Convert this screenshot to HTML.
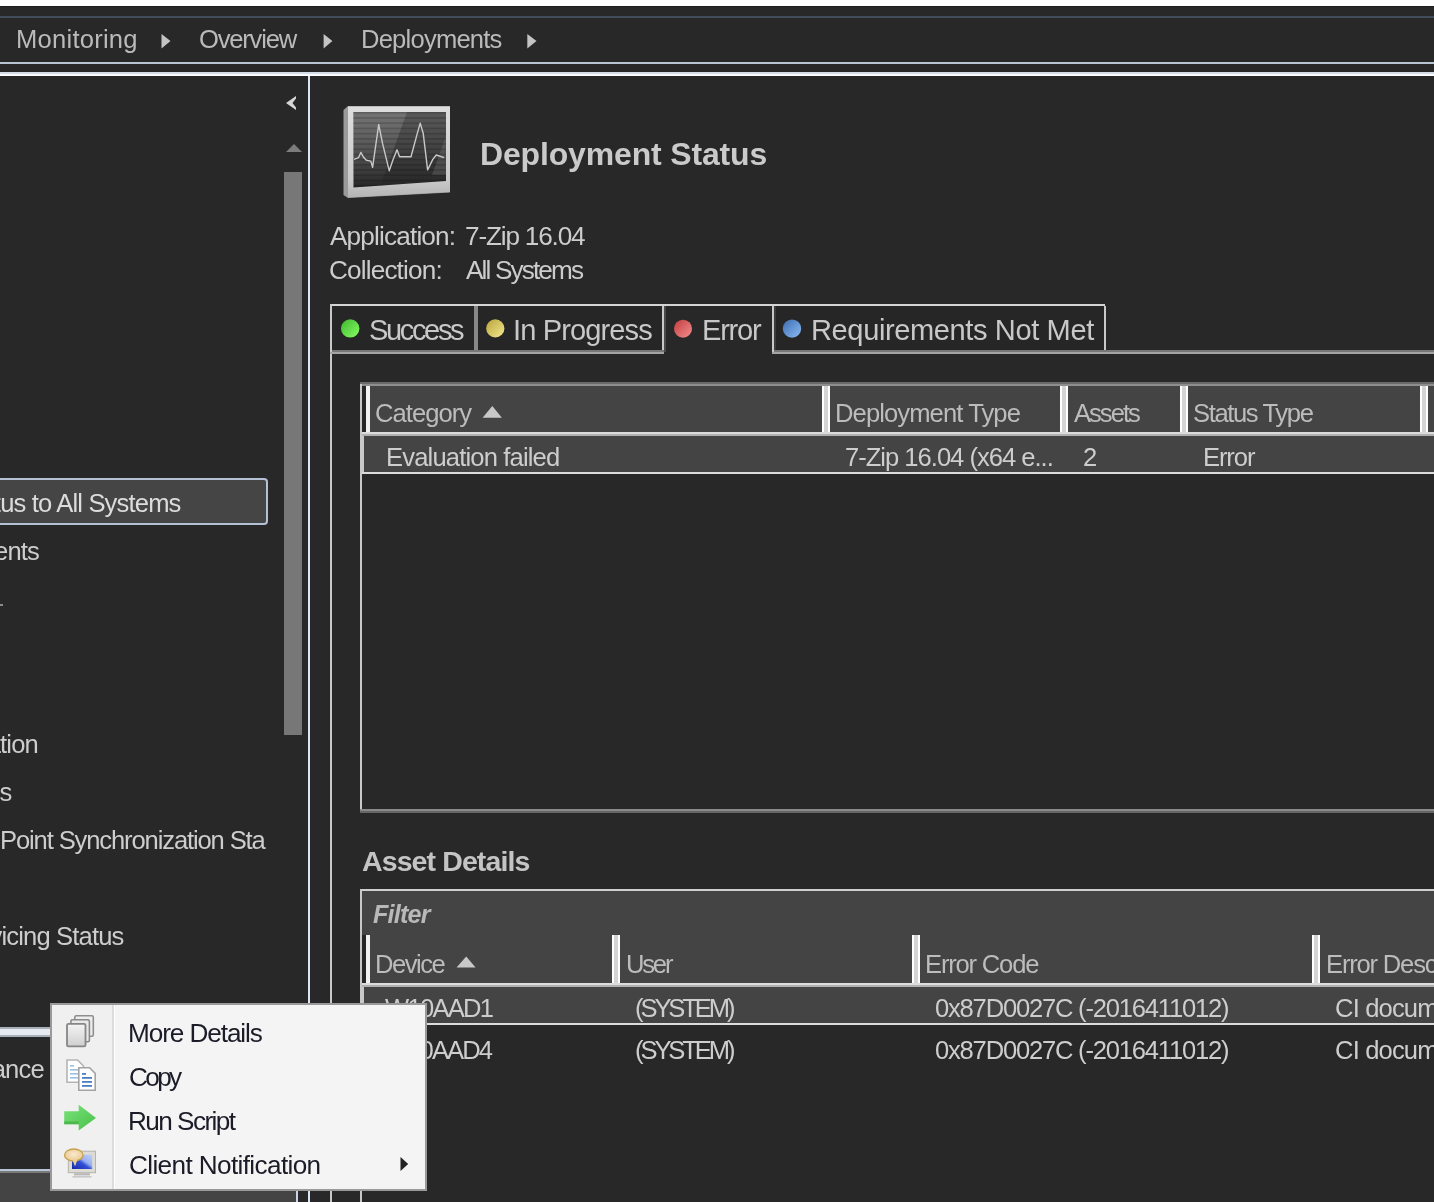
<!DOCTYPE html>
<html><head><meta charset="utf-8"><style>
html,body{margin:0;padding:0;}
body{width:1434px;height:1202px;overflow:hidden;position:relative;background:#282828;font-family:"Liberation Sans",sans-serif;}
.a{position:absolute;}
.t{position:absolute;white-space:nowrap;line-height:1;-webkit-font-smoothing:antialiased;will-change:transform;}
.sep{width:8px;height:46px;background:linear-gradient(90deg,#fff 0,#fff 2px,#d4d4d4 2px,#d4d4d4 6px,#fff 6px);}
.sep2{width:8px;height:48px;background:linear-gradient(90deg,#fff 0,#fff 2px,#d4d4d4 2px,#d4d4d4 6px,#fff 6px);}
</style></head><body>
<!-- top chrome -->
<div class="a" style="left:0;top:0;width:1434px;height:6px;background:#fff"></div>
<div class="a" style="left:0;top:6px;width:1434px;height:1px;background:#1e1e1e"></div>
<div class="a" style="left:0;top:16px;width:1434px;height:2px;background:#414c5a"></div>
<div class="a" style="left:0;top:62px;width:1434px;height:2px;background:#b8c6d4"></div>
<div class="a" style="left:0;top:72px;width:1434px;height:2px;background:#d4dde8"></div>
<div class="a" style="left:0;top:74px;width:1434px;height:2px;background:#fafcff"></div>
<!-- breadcrumb arrows -->
<svg class="a" style="left:0;top:0" width="600" height="60">
 <polygon points="161.5,34 170.5,41 161.5,48.5" fill="#c4c4c4"/>
 <polygon points="323.6,34 332.4,41 323.6,48.5" fill="#c4c4c4"/>
 <polygon points="527.3,34 536.5,41 527.3,48.5" fill="#c4c4c4"/>
</svg>
<!-- vertical divider -->
<div class="a" style="left:308px;top:76px;width:2px;height:1126px;background:#dde6f4"></div>
<!-- left pane controls -->
<svg class="a" style="left:276px;top:88px" width="30" height="70" viewBox="276 88 30 70">
 <polygon points="296,96 286,103 296,110 296,107.5 292.5,103 296,98.5" fill="#d6d6d6"/>
 <polygon points="286,152 294,144 302,152" fill="#7c7c7c"/>
</svg>
<div class="a" style="left:284px;top:172px;width:18px;height:563px;background:#777"></div>
<!-- selected item -->
<div class="a" style="left:-4px;top:478px;width:268px;height:43px;background:#454545;border:2px solid #b4c0d4;border-radius:4px"></div>
<div class="a" style="left:0;top:604px;width:3px;height:2px;background:#8a8a8a"></div>
<!-- left bottom section -->
<div class="a" style="left:0;top:1027px;width:296px;height:2px;background:#a8b0b8"></div>
<div class="a" style="left:0;top:1029px;width:296px;height:6px;background:#e6eaf0"></div>
<div class="a" style="left:0;top:1035px;width:296px;height:2px;background:#a8b0b8"></div>
<div class="a" style="left:0;top:1169px;width:296px;height:2px;background:#b8c4d8"></div>
<div class="a" style="left:0;top:1171px;width:296px;height:2px;background:#7a7a7a"></div>
<div class="a" style="left:0;top:1173px;width:296px;height:29px;background:#444"></div>
<div class="a" style="left:296px;top:1173px;width:2px;height:29px;background:#c8d4e8"></div>

<!-- monitor icon -->
<svg class="a" style="left:335px;top:100px" width="125" height="105" viewBox="335 100 125 105">
 <defs>
  <linearGradient id="frm" x1="0" y1="0" x2="0" y2="1">
   <stop offset="0" stop-color="#dedede"/><stop offset="0.8" stop-color="#cacaca"/><stop offset="1" stop-color="#b4b4b4"/>
  </linearGradient>
  <linearGradient id="scr" x1="0" y1="0" x2="0" y2="1">
   <stop offset="0" stop-color="#5a5a5a"/><stop offset="0.55" stop-color="#3e3e3e"/><stop offset="1" stop-color="#252525"/>
  </linearGradient>
  <linearGradient id="hl" x1="0" y1="0" x2="0" y2="1">
   <stop offset="0" stop-color="#888" stop-opacity="0.55"/><stop offset="1" stop-color="#888" stop-opacity="0"/>
  </linearGradient>
  <pattern id="scan" x="0" y="112" width="10" height="5.2" patternUnits="userSpaceOnUse">
   <rect x="0" y="0" width="10" height="1.6" fill="#000" opacity="0.18"/>
  </pattern>
 </defs>
 <path d="M343.5,110 L348,106 L450,106 L450,192.5 L348,198 L343.5,195 Z" fill="#9a9a9a"/>
 <path d="M348,106.5 L450,106.5 L450,192 L348,197.5 Z" fill="url(#frm)"/>
 <path d="M353.5,112 L446,112 L446,181 L353.5,187.5 Z" fill="url(#scr)"/>
 <path d="M353.5,112 L407,112 L380,187 L353.5,187 Z" fill="url(#hl)"/>
 <path d="M446,136 L446,175 L432,175 Z" fill="#777" opacity="0.35"/>
 <path d="M353.5,112 L446,112 L446,181 L353.5,187.5 Z" fill="url(#scan)"/>
 <polyline points="354,159.4 358.6,157.6 360.8,152.4 363.8,157.6 366.4,160.3 370.8,161.1 372.6,167.3 378.7,124.5 382.6,143.7 389.2,170.7 393.1,159.4 397,149.8 399.6,156.8 411,156.8 417.1,134.1 420.2,123.1 423.2,133.2 427.6,169.9 432.8,159.4 436.3,155 444.2,157.6" fill="none" stroke="#c8c8c8" stroke-width="1.4" stroke-linejoin="round"/>
</svg>

<!-- tab strip -->
<div class="a" style="left:332px;top:306px;width:143px;height:44px;background:#262626"></div>
<div class="a" style="left:478px;top:306px;width:185px;height:44px;background:#262626"></div>
<div class="a" style="left:776px;top:306px;width:329px;height:44px;background:#262626"></div>
<div class="a" style="left:330px;top:304px;width:775px;height:2px;background:#d4d4d4"></div>
<div class="a" style="left:330px;top:304px;width:2px;height:898px;background:#c8c8c8"></div>
<div class="a" style="left:474px;top:306px;width:4px;height:48px;background:#888"></div>
<div class="a" style="left:662px;top:306px;width:2px;height:48px;background:#c8c8c8"></div>
<div class="a" style="left:664px;top:306px;width:2px;height:46px;background:#4a4a4a"></div>
<div class="a" style="left:772px;top:306px;width:2px;height:48px;background:#c8c8c8"></div>
<div class="a" style="left:774px;top:306px;width:2px;height:44px;background:#3c3c3c"></div>
<div class="a" style="left:1104px;top:306px;width:2px;height:48px;background:#c8c8c8"></div>
<div class="a" style="left:332px;top:350px;width:332px;height:2px;background:#777"></div>
<div class="a" style="left:330px;top:352px;width:334px;height:2px;background:#a4a4a4"></div>
<div class="a" style="left:774px;top:350px;width:660px;height:2px;background:#777"></div>
<div class="a" style="left:772px;top:352px;width:662px;height:2px;background:#a4a4a4"></div>
<!-- status dots -->
<svg class="a" style="left:330px;top:310px" width="480" height="40" viewBox="330 310 480 40">
 <defs>
  <linearGradient id="dg" x1="0" y1="0" x2="1" y2="1"><stop offset="0" stop-color="#3fb52e"/><stop offset="1" stop-color="#86ff62"/></linearGradient>
  <linearGradient id="dy" x1="0" y1="0" x2="1" y2="1"><stop offset="0" stop-color="#b8a43a"/><stop offset="1" stop-color="#f4e890"/></linearGradient>
  <linearGradient id="dr" x1="0" y1="0" x2="1" y2="1"><stop offset="0" stop-color="#c23c3c"/><stop offset="1" stop-color="#f49090"/></linearGradient>
  <linearGradient id="db" x1="0" y1="0" x2="1" y2="1"><stop offset="0" stop-color="#3c6cb0"/><stop offset="1" stop-color="#8cbcf4"/></linearGradient>
 </defs>
 <circle cx="350.2" cy="328.4" r="9.2" fill="url(#dg)"/>
 <circle cx="495.3" cy="328.4" r="9.1" fill="url(#dy)"/>
 <circle cx="683" cy="328.7" r="9.0" fill="url(#dr)"/>
 <circle cx="792" cy="328.6" r="9.2" fill="url(#db)"/>
</svg>

<!-- grid 1 -->
<div class="a" style="left:360px;top:382px;width:1074px;height:2px;background:#6a6a6a"></div>
<div class="a" style="left:360px;top:384px;width:1074px;height:2px;background:#8e8e8e"></div>
<div class="a" style="left:360px;top:384px;width:2px;height:428px;background:#c8c8c8"></div>
<div class="a" style="left:362px;top:386px;width:1072px;height:46px;background:#444"></div>
<div class="a" style="left:362px;top:386px;width:4px;height:46px;background:#262626"></div>
<div class="a" style="left:366px;top:386px;width:4px;height:46px;background:#f2f2f2"></div>
<div class="a" style="left:362px;top:432px;width:1072px;height:2px;background:#dcdcdc"></div>
<div class="a" style="left:362px;top:434px;width:1072px;height:2px;background:#b0b0b0"></div>
<div class="a" style="left:364px;top:436px;width:1070px;height:36px;background:#444"></div>
<div class="a" style="left:362px;top:436px;width:2px;height:36px;background:#c8c8c8"></div>
<div class="a" style="left:362px;top:472px;width:1072px;height:2px;background:#dcdcdc"></div>
<div class="a" style="left:360px;top:809px;width:1074px;height:2px;background:#8a8a8a"></div>
<div class="a" style="left:360px;top:811px;width:1074px;height:2px;background:#666"></div>
<!-- grid1 separators -->
<div class="a sep" style="left:822px;top:386px"></div>
<div class="a sep" style="left:1060px;top:386px"></div>
<div class="a sep" style="left:1180px;top:386px"></div>
<div class="a sep" style="left:1420px;top:386px"></div>
<svg class="a" style="left:480px;top:400px" width="30" height="24"><polygon points="2.6,17.8 12.3,6 21.9,17.8" fill="#c8c8c8"/></svg>

<!-- grid 2 -->
<div class="a" style="left:360px;top:889px;width:1074px;height:2px;background:#cfcfcf"></div>
<div class="a" style="left:360px;top:889px;width:2px;height:313px;background:#c8c8c8"></div>
<div class="a" style="left:362px;top:891px;width:1072px;height:92px;background:#444"></div>
<div class="a" style="left:362px;top:935px;width:4px;height:48px;background:#262626"></div>
<div class="a" style="left:366px;top:935px;width:4px;height:48px;background:#f2f2f2"></div>
<div class="a" style="left:362px;top:983px;width:1072px;height:2px;background:#dcdcdc"></div>
<div class="a" style="left:362px;top:985px;width:1072px;height:2px;background:#b0b0b0"></div>
<div class="a" style="left:364px;top:987px;width:1070px;height:36px;background:#444"></div>
<div class="a" style="left:362px;top:987px;width:2px;height:36px;background:#c8c8c8"></div>
<div class="a" style="left:362px;top:1023px;width:1072px;height:2px;background:#dcdcdc"></div>
<div class="a sep2" style="left:612px;top:935px"></div>
<div class="a sep2" style="left:912px;top:935px"></div>
<div class="a sep2" style="left:1312px;top:935px"></div>
<svg class="a" style="left:454px;top:950px" width="30" height="24"><polygon points="2.6,17.5 12.2,6.5 21.6,17.5" fill="#c8c8c8"/></svg>

<div class="t" style="left:15.50px;top:27.25px;font-size:25.58px;letter-spacing:0.234px;color:#bababa;font-weight:normal;font-style:normal">Monitoring</div>
<div class="t" style="left:199.30px;top:27.25px;font-size:25.58px;letter-spacing:-1.204px;color:#bababa;font-weight:normal;font-style:normal">Overview</div>
<div class="t" style="left:360.80px;top:27.25px;font-size:25.58px;letter-spacing:-0.788px;color:#bababa;font-weight:normal;font-style:normal">Deployments</div>
<div class="t" style="left:479.50px;top:137.83px;font-size:31.98px;letter-spacing:-0.142px;color:#cacaca;font-weight:bold;font-style:normal">Deployment Status</div>
<div class="t" style="left:330.00px;top:222.75px;font-size:26.16px;letter-spacing:-0.833px;color:#cccccc;font-weight:normal;font-style:normal">Application:</div>
<div class="t" style="left:465.20px;top:222.75px;font-size:26.16px;letter-spacing:-1.167px;color:#cccccc;font-weight:normal;font-style:normal">7-Zip 16.04</div>
<div class="t" style="left:329.00px;top:256.75px;font-size:26.16px;letter-spacing:-0.846px;color:#cccccc;font-weight:normal;font-style:normal">Collection:</div>
<div class="t" style="left:466.20px;top:256.75px;font-size:26.16px;letter-spacing:-1.854px;color:#cccccc;font-weight:normal;font-style:normal">All Systems</div>
<div class="t" style="left:369.20px;top:316.29px;font-size:29.07px;letter-spacing:-2.376px;color:#c8c8c8;font-weight:normal;font-style:normal">Success</div>
<div class="t" style="left:513.30px;top:316.29px;font-size:29.07px;letter-spacing:-0.880px;color:#c8c8c8;font-weight:normal;font-style:normal">In Progress</div>
<div class="t" style="left:701.50px;top:316.29px;font-size:29.07px;letter-spacing:-1.244px;color:#c8c8c8;font-weight:normal;font-style:normal">Error</div>
<div class="t" style="left:811.00px;top:316.29px;font-size:29.07px;letter-spacing:-0.395px;color:#c8c8c8;font-weight:normal;font-style:normal">Requirements Not Met</div>
<div class="t" style="left:374.80px;top:400.95px;font-size:25.58px;letter-spacing:-0.971px;color:#bcbcbc;font-weight:normal;font-style:normal">Category</div>
<div class="t" style="left:835.40px;top:400.95px;font-size:25.58px;letter-spacing:-0.908px;color:#bcbcbc;font-weight:normal;font-style:normal">Deployment Type</div>
<div class="t" style="left:1074.30px;top:400.95px;font-size:25.58px;letter-spacing:-1.994px;color:#bcbcbc;font-weight:normal;font-style:normal">Assets</div>
<div class="t" style="left:1192.80px;top:400.95px;font-size:25.58px;letter-spacing:-1.375px;color:#bcbcbc;font-weight:normal;font-style:normal">Status Type</div>
<div class="t" style="left:385.50px;top:445.25px;font-size:25.58px;letter-spacing:-0.842px;color:#cdcdcd;font-weight:normal;font-style:normal">Evaluation failed</div>
<div class="t" style="left:844.70px;top:445.25px;font-size:25.58px;letter-spacing:-1.005px;color:#cdcdcd;font-weight:normal;font-style:normal">7-Zip 16.04 (x64 e...</div>
<div class="t" style="left:1083.00px;top:445.25px;font-size:25.58px;letter-spacing:0.000px;color:#cdcdcd;font-weight:normal;font-style:normal">2</div>
<div class="t" style="left:1202.80px;top:445.25px;font-size:25.58px;letter-spacing:-1.105px;color:#cdcdcd;font-weight:normal;font-style:normal">Error</div>
<div class="t" style="left:362.40px;top:847.38px;font-size:28.49px;letter-spacing:-0.881px;color:#c4c4c4;font-weight:bold;font-style:normal">Asset Details</div>
<div class="t" style="left:373.00px;top:902.41px;font-size:25.15px;letter-spacing:-0.810px;color:#b8b8b8;font-weight:bold;font-style:italic">Filter</div>
<div class="t" style="left:375.00px;top:952.25px;font-size:25.58px;letter-spacing:-1.492px;color:#bcbcbc;font-weight:normal;font-style:normal">Device</div>
<div class="t" style="left:625.80px;top:952.25px;font-size:25.58px;letter-spacing:-2.195px;color:#bcbcbc;font-weight:normal;font-style:normal">User</div>
<div class="t" style="left:925.00px;top:952.25px;font-size:25.58px;letter-spacing:-1.185px;color:#bcbcbc;font-weight:normal;font-style:normal">Error Code</div>
<div class="t" style="left:1325.50px;top:952.25px;font-size:25.58px;letter-spacing:-1.185px;color:#bcbcbc;font-weight:normal;font-style:normal">Error Description</div>
<div class="t" style="left:385.00px;top:996.25px;font-size:25.58px;letter-spacing:-1.731px;color:#cdcdcd;font-weight:normal;font-style:normal">W10AAD1</div>
<div class="t" style="left:635.00px;top:996.25px;font-size:25.58px;letter-spacing:-3.099px;color:#cdcdcd;font-weight:normal;font-style:normal">(SYSTEM)</div>
<div class="t" style="left:935.00px;top:996.25px;font-size:25.58px;letter-spacing:-1.209px;color:#cdcdcd;font-weight:normal;font-style:normal">0x87D0027C (-2016411012)</div>
<div class="t" style="left:1335.00px;top:996.25px;font-size:25.58px;letter-spacing:-0.842px;color:#cdcdcd;font-weight:normal;font-style:normal">CI document not found</div>
<div class="t" style="left:385.00px;top:1038.25px;font-size:25.58px;letter-spacing:-1.898px;color:#cdcdcd;font-weight:normal;font-style:normal">W10AAD4</div>
<div class="t" style="left:635.00px;top:1038.25px;font-size:25.58px;letter-spacing:-3.099px;color:#cdcdcd;font-weight:normal;font-style:normal">(SYSTEM)</div>
<div class="t" style="left:935.00px;top:1038.25px;font-size:25.58px;letter-spacing:-1.209px;color:#cdcdcd;font-weight:normal;font-style:normal">0x87D0027C (-2016411012)</div>
<div class="t" style="left:1335.00px;top:1038.25px;font-size:25.58px;letter-spacing:-0.842px;color:#cdcdcd;font-weight:normal;font-style:normal">CI document not found</div>
<div class="t" style="left:-42.42px;top:491.25px;font-size:25.58px;letter-spacing:-0.842px;color:#dcdcdc;font-weight:normal;font-style:normal">Status to All Systems</div>
<div class="t" style="left:-101.06px;top:539.25px;font-size:25.58px;letter-spacing:-0.842px;color:#cdcdcd;font-weight:normal;font-style:normal">Deployments</div>
<div class="t" style="left:-205.54px;top:732.25px;font-size:25.58px;letter-spacing:-0.842px;color:#cdcdcd;font-weight:normal;font-style:normal">Compliance Evaluation</div>
<div class="t" style="left:-179.61px;top:780.25px;font-size:25.58px;letter-spacing:-0.842px;color:#cdcdcd;font-weight:normal;font-style:normal">Distribution Status</div>
<div class="t" style="left:0.00px;top:828.25px;font-size:25.58px;letter-spacing:-1.128px;color:#cdcdcd;font-weight:normal;font-style:normal">Point Synchronization Sta</div>
<div class="t" style="left:-184.55px;top:924.25px;font-size:25.58px;letter-spacing:-0.842px;color:#cdcdcd;font-weight:normal;font-style:normal">Windows 10 Servicing Status</div>
<div class="t" style="left:-160.38px;top:1057.25px;font-size:25.58px;letter-spacing:-0.842px;color:#cdcdcd;font-weight:normal;font-style:normal">Client Performance</div>
<!-- context menu -->
<div class="a" style="left:50px;top:1003px;width:373px;height:184px;background:#f4f4f4;border:2px solid #999"></div>
<div class="a" style="left:52px;top:1005px;width:60px;height:184px;background:#f0f0f0"></div>
<div class="a" style="left:112px;top:1005px;width:2px;height:184px;background:#dcdcdc"></div>
<div class="a" style="left:114px;top:1005px;width:1px;height:184px;background:#fff"></div>
<svg class="a" style="left:50px;top:1003px" width="377" height="188" viewBox="50 1003 377 188">
 <defs>
  <linearGradient id="pg" x1="0" y1="0" x2="0" y2="1"><stop offset="0" stop-color="#f4f4f4"/><stop offset="1" stop-color="#cfcfcf"/></linearGradient>
 </defs>
 <!-- more details -->
 <rect x="74.8" y="1015.8" width="18.5" height="20.5" rx="1.5" fill="#eee" stroke="#8e8e8e" stroke-width="1.6"/>
 <rect x="70.9" y="1019.8" width="18.5" height="22" rx="1.5" fill="#e8e8e8" stroke="#8a8a8a" stroke-width="1.6"/>
 <rect x="67" y="1023.8" width="18.5" height="22.6" rx="1.5" fill="url(#pg)" stroke="#868686" stroke-width="1.8"/>
 <!-- copy -->
 <path d="M67,1060 L77.5,1060 L83.5,1066 L83.5,1082.3 L67,1082.3 Z" fill="#fff" stroke="#b4b4b4" stroke-width="1.6"/>
 <rect x="70" y="1065" width="4" height="1.6" fill="#9cc0e0"/>
 <rect x="70" y="1069" width="8" height="1.6" fill="#9cc0e0"/>
 <rect x="70" y="1073" width="8" height="1.6" fill="#9cc0e0"/>
 <rect x="70" y="1077" width="8" height="1.6" fill="#9cc0e0"/>
 <path d="M78.8,1067.8 L89.6,1067.8 L95.2,1073.4 L95.2,1090.2 L78.8,1090.2 Z" fill="#fff" stroke="#a4a4a4" stroke-width="1.6"/>
 <rect x="82" y="1073" width="4" height="1.8" fill="#4a80c0"/>
 <rect x="82" y="1077" width="10" height="1.8" fill="#4a80c0"/>
 <rect x="82" y="1081" width="10" height="1.8" fill="#4a80c0"/>
 <rect x="82" y="1085" width="10" height="1.8" fill="#4a80c0"/>
 <!-- run script arrow -->
 <defs><linearGradient id="arw" x1="0" y1="0" x2="1" y2="1"><stop offset="0" stop-color="#7ae27a"/><stop offset="1" stop-color="#48c048"/></linearGradient></defs><path d="M64.2,1111.3 L78.7,1111.3 L78.7,1104.8 L96,1117.9 L78.7,1130.6 L78.7,1124.2 L64.2,1124.2 Z" fill="url(#arw)"/>
 <path d="M64.2,1121.5 L78.7,1121.5 L78.7,1124.2 L64.2,1124.2 Z" fill="#4cb84c"/>
 <!-- client notification -->
 <defs><linearGradient id="scrn" x1="0" y1="1" x2="1" y2="0"><stop offset="0" stop-color="#1a28a8"/><stop offset="0.45" stop-color="#3050d8"/><stop offset="0.6" stop-color="#98b0f0"/><stop offset="1" stop-color="#c0d0f8"/></linearGradient>
 <radialGradient id="bub" cx="0.5" cy="0.45" r="0.6"><stop offset="0" stop-color="#fbe8d0"/><stop offset="1" stop-color="#e8c888"/></radialGradient></defs>
 <rect x="68.3" y="1151.2" width="27.2" height="21.5" fill="#dcdcd4" stroke="#b4b4ac" stroke-width="1"/>
 <rect x="72" y="1154.8" width="20.2" height="14.2" fill="url(#scrn)"/>
 <rect x="74" y="1173.2" width="16" height="2.2" fill="#b8b8b8"/>
 <rect x="72.5" y="1176" width="19" height="1.6" fill="#c8c8c8"/>
 <ellipse cx="73.8" cy="1155" rx="9.3" ry="6" fill="url(#bub)" stroke="#c8a050" stroke-width="1.3"/>
 <path d="M72.5,1160 L75,1166.5 L77.5,1159.5 Z" fill="#e8d090"/>
 <!-- submenu arrow -->
 <polygon points="400.5,1157 408.2,1164 400.5,1171" fill="#222"/>
</svg>

<div class="t" style="left:127.50px;top:1019.75px;font-size:26.16px;letter-spacing:-1.085px;color:#1c1c28;font-weight:normal;font-style:normal">More Details</div>
<div class="t" style="left:128.50px;top:1063.75px;font-size:26.16px;letter-spacing:-2.628px;color:#1c1c28;font-weight:normal;font-style:normal">Copy</div>
<div class="t" style="left:127.50px;top:1107.75px;font-size:26.16px;letter-spacing:-1.560px;color:#1c1c28;font-weight:normal;font-style:normal">Run Script</div>
<div class="t" style="left:128.50px;top:1151.75px;font-size:26.16px;letter-spacing:-0.632px;color:#1c1c28;font-weight:normal;font-style:normal">Client Notification</div>
</body></html>
